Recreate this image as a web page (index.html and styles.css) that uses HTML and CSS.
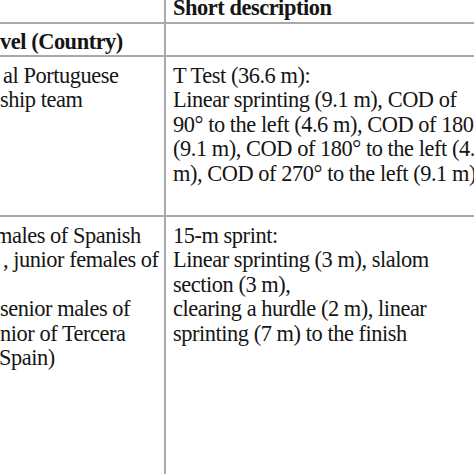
FILE: index.html
```html
<!DOCTYPE html>
<html lang="en">
<head>
<meta charset="utf-8">
<title>Table</title>
<link rel="stylesheet" href="styles.css">
</head>
<body>
<div class="tbl">
  <div class="cell l"></div>
  <div class="cell r"><span class="ln h">Short description</span></div>

  <div class="cell l"><span class="ln h">vel (Country)</span></div>
  <div class="cell r"></div>

  <div class="cell l">
    <span class="ln in3">al Portuguese</span>
    <span class="ln">ship team</span>
  </div>
  <div class="cell r tall">
    <span class="ln">T Test (36.6 m):</span>
    <span class="ln">Linear sprinting (9.1 m), COD of</span>
    <span class="ln">90° to the left (4.6 m), COD of 180° to the right</span>
    <span class="ln">(9.1 m), COD of 180° to the left (4.6</span>
    <span class="ln">m), COD of 270° to the left (9.1 m)</span>
  </div>

  <div class="cell l last">
    <span class="ln cut5">males of Spanish</span>
    <span class="ln in3">, junior females of</span>
    <span class="ln">&nbsp;</span>
    <span class="ln">senior males of</span>
    <span class="ln">nior of Tercera</span>
    <span class="ln cut1">Spain)</span>
  </div>
  <div class="cell r last">
    <span class="ln">15-m sprint:</span>
    <span class="ln">Linear sprinting (3 m), slalom</span>
    <span class="ln">section (3 m),</span>
    <span class="ln">clearing a hurdle (2 m), linear</span>
    <span class="ln">sprinting (7 m) to the finish</span>
  </div>
</div>
</body>
</html>
```
FILE: styles.css
```css
html, body {
  margin: 0;
  padding: 0;
  background: #ffffff;
}
body {
  width: 474px;
  height: 474px;
  overflow: hidden;
  font-family: "Liberation Serif", "Times New Roman", serif;
  font-size: 22.4px;
  letter-spacing: -0.45px;
  line-height: 24.6px;
  color: #151515;
}
.tbl {
  display: grid;
  grid-template-columns: 166px minmax(0, 1fr);
  grid-template-rows: auto auto auto 1fr;
  margin-top: -9.8px;
  min-height: 500px;
}
.cell {
  padding: 6.2px 0 0.8px 7px;
  border-bottom: 2px solid #a9a9a9;
  white-space: nowrap;
  overflow: hidden;
}
.cell.l {
  padding-left: 0;
  border-right: 2px solid #a9a9a9;
}
.cell.tall {
  padding-bottom: 28.8px;
}
.cell.last {
  border-bottom: none;
}
.ln {
  display: block;
}
.h {
  font-weight: bold;
}
.in3 {
  margin-left: 3px;
}
.cut5 {
  margin-left: -5px;
}
.cut1 {
  margin-left: -1px;
}
```
